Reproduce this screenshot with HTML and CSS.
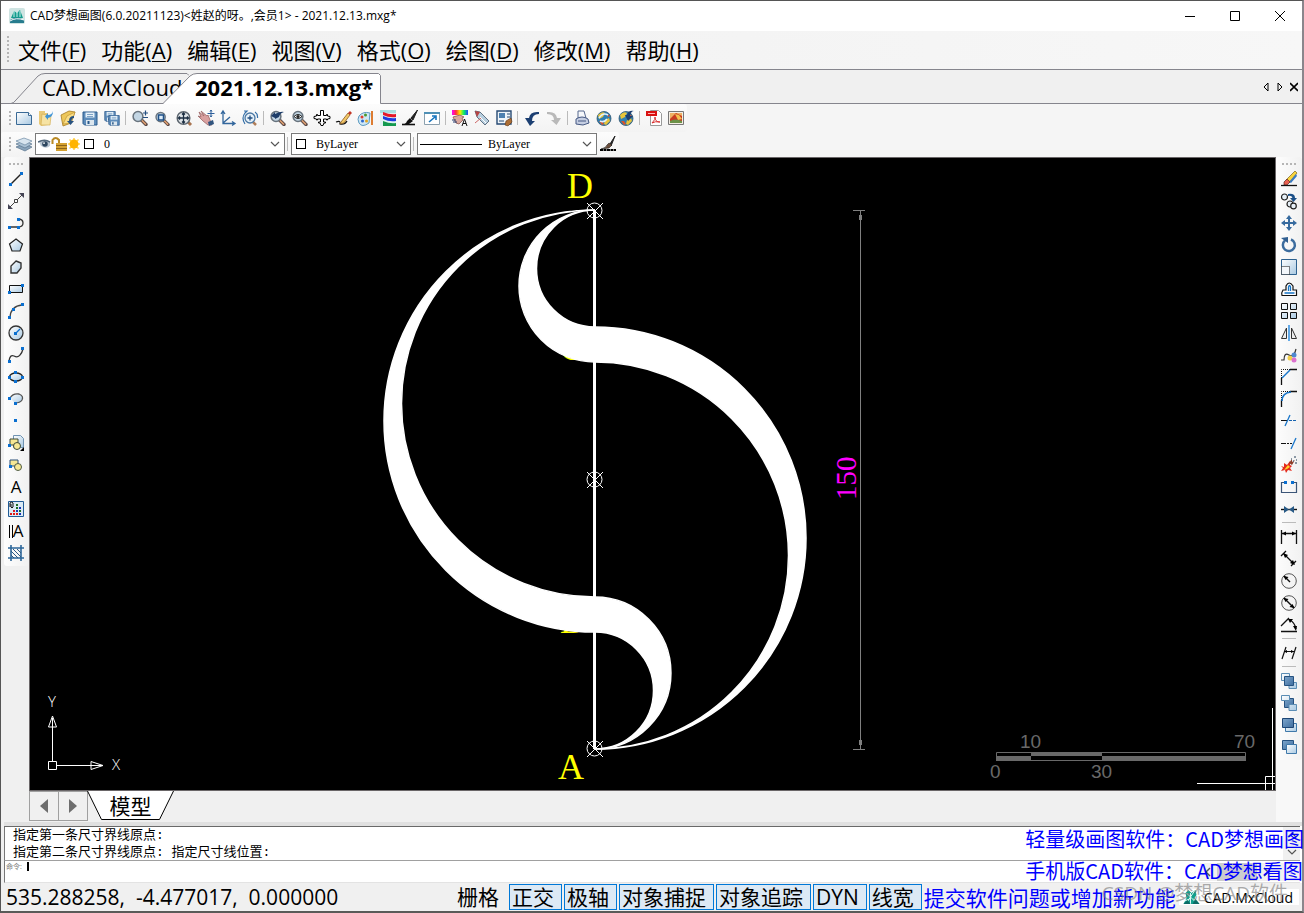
FILE: index.html
```html
<!DOCTYPE html>
<html lang="zh-CN">
<head>
    <meta charset="UTF-8">
    <meta name="viewport" content="width=device-width, initial-scale=1.0">
    <title>CAD梦想画图</title>
    <link rel="stylesheet" href="styles.css">
</head>
<body>
    <!-- Shared icon parts -->
    <svg class="defs" aria-hidden="true">
        <defs>
            <linearGradient id="sheet" x1="0" y1="0" x2="1" y2="1"><stop offset="0" stop-color="#fff"/><stop offset="1" stop-color="#a9c9e2"/></linearGradient>
            <linearGradient id="steel" x1="0" y1="0" x2="1" y2="1"><stop offset="0" stop-color="#7ea6cc"/><stop offset="1" stop-color="#3d6c9e"/></linearGradient>
            <linearGradient id="rainbow" x1="0" y1="0" x2="1" y2="0"><stop offset="0" stop-color="#f0f"/><stop offset=".25" stop-color="#f33"/><stop offset=".5" stop-color="#fe0"/><stop offset=".75" stop-color="#0e6"/><stop offset="1" stop-color="#24f"/></linearGradient>
        </defs>
        <symbol id="lens" viewBox="0 0 16 16">
            <path d="M9.500 10L14 14.500" stroke="#5c4a48" stroke-width="3.400" stroke-linecap="round"/>
            <path d="M10 10.500L13.500 14" stroke="#e0a070" stroke-width="1.600" stroke-linecap="round"/>
            <circle cx="6" cy="6.500" r="4.900" fill="#c3d6e4" stroke="#68737d" stroke-width="1.500"/>
        </symbol>
        <symbol id="floppy" viewBox="0 0 16 16">
            <path d="M1 2h14v13H2.500L1 13.500z" fill="#5f8dbb" stroke="#2b5a8c"/>
            <path d="M3.500 2.500h9v5h-9z" fill="#e6f0f8"/><path d="M5 4.500h6M5 6.500h6" stroke="#7ea3c6"/>
            <path d="M4 10h8v5H4z" fill="#dce6ee"/><path d="M5.500 11h2v3h-2z" fill="#2b5a8c"/>
        </symbol>
        <symbol id="globe" viewBox="0 0 16 16">
            <circle cx="8" cy="8.500" r="7" fill="#2f7fb2" stroke="#31556f" stroke-width=".8"/>
            <path d="M2 5q4-4 7-2l-2 4-4 2zM9 10l4-2 1 3-4 4-2-1z" fill="#e8c43a"/>
            <path d="M3 11l3 0 2 3-2 1zM11 4l3 2-2 1z" fill="#d9542b"/>
        </symbol>
        <symbol id="brand" viewBox="0 0 16 16">
            <path d="M0 15l3-6-1-5 3-3 3 3 4-3 1 5-2 3 5 6z" fill="#12a08e"/>
            <path d="M3 14L11 2M3 4l10 10M7 4v11M1 12l5-2M10 10l5 2" fill="none" stroke="#e2f7f3"/>
            <path d="M0 15l4-4 3 4zM9 15l3-5 4 5z" fill="#0b6b66"/>
        </symbol>
        <symbol id="node" viewBox="0 0 3 3"><path d="M0 0h3v3H0z" fill="#0a6fd0"/></symbol>
        <symbol id="chevron" viewBox="0 0 10 6"><path d="M1 1l4 4 4-4" fill="none" stroke="#555" stroke-width="1.200"/></symbol>
    </svg>

    <div class="window">
        <header class="titlebar">
            <svg class="app-icon" viewBox="0 0 16 16"><rect width="16" height="16" rx="2" fill="#cfe4e2"/><path d="M2 10l3-7 3 2 3-3 3 8z" fill="#149c8d"/><path d="M5 3v6M8 4v5M11 3v6" stroke="#c9f0ea"/><path d="M1 12q7-5 14 0v3H1z" fill="#277c8e"/><path d="M1 13q6-4 14-1" fill="none" stroke="#fff"/></svg>
            <h1 class="title">CAD梦想画图(6.0.20211123)&lt;姓赵的呀。,会员1&gt; - 2021.12.13.mxg*</h1>
            <div class="window-controls">
                <button aria-label="最小化"><svg viewBox="0 0 10 10"><path d="M0 5.500h10" stroke="#000"/></svg></button>
                <button aria-label="最大化"><svg viewBox="0 0 10 10"><path d="M.5.500h9v9h-9z" fill="none" stroke="#000"/></svg></button>
                <button aria-label="关闭"><svg viewBox="0 0 10 10"><path d="M0 0l10 10M10 0L0 10" stroke="#000"/></svg></button>
            </div>
        </header>

        <nav class="menubar">
            <span class="grip"></span>
            <button>文件(<u>F</u>)</button>
            <button>功能(<u>A</u>)</button>
            <button>编辑(<u>E</u>)</button>
            <button>视图(<u>V</u>)</button>
            <button>格式(<u>O</u>)</button>
            <button>绘图(<u>D</u>)</button>
            <button>修改(<u>M</u>)</button>
            <button>帮助(<u>H</u>)</button>
        </nav>

        <div class="doc-tabs">
            <button class="doc-tab">
                <svg viewBox="0 0 178 31" preserveAspectRatio="none"><path d="M0 30.500L4 28 27 3Q30 .5 34 .5H178V30.500" fill="#f0f0f0"/><path d="M0 30.500Q3 30 5 27L27 3Q30 .5 34 .5H176l2 2" fill="none" stroke="#85858d"/><path d="M0 30.500h178" stroke="#85858d"/></svg>
                <span>CAD.MxCloud</span>
            </button>
            <button class="doc-tab active">
                <svg viewBox="0 0 218 31" preserveAspectRatio="none"><path d="M0 31L27 3Q30 .5 34 .5H215.500l2 2V31z" fill="#fff"/><path d="M0 30.500L27 3Q30 .5 34 .5H215.500l2 2V30.500" fill="none" stroke="#85858d"/></svg>
                <span>2021.12.13.mxg*</span>
            </button>
            <div class="doc-controls">
                <button aria-label="上一个"><svg viewBox="0 0 8 10"><path d="M6 1v8L2 5z" fill="none" stroke="#000"/></svg></button>
                <button aria-label="下一个"><svg viewBox="0 0 8 10"><path d="M2 1v8l4-4z" fill="none" stroke="#000"/></svg></button>
                <button aria-label="关闭文档"><svg viewBox="0 0 8 10"><path d="M0 1l8 8M8 1L0 9" stroke="#000" stroke-width="1.600"/></svg></button>
            </div>
        </div>

        <div class="toolbars">
            <div class="toolbar">
                <span class="grip"></span>
                <button aria-label="新建"><svg viewBox="0 0 16 16"><path d="M.5 2.500h12l3 3v9H.5z" fill="url(#sheet)" stroke="#3a6a96"/><path d="M12.500 2.500v3h3" fill="#fff" stroke="#3a6a96"/></svg></button>
                <button aria-label="打开"><svg viewBox="0 0 16 16"><path d="M1 1h6v2h3v12l-7 1-2-2z" fill="#e8c977"/><path d="M4 4l9 2-1 9H3z" fill="#f6e3a4" stroke="#d0a848" stroke-width=".6"/><path d="M15 1q-1 4-5 4V3L7 6.500 10 10V8q5-1 5-7" fill="#3f94d6"/></svg></button>
                <button aria-label="打开网络图纸"><svg viewBox="0 0 16 16"><path d="M1 5l8-4 6 1-4 11-8 3-1-5z" fill="#edc75a" stroke="#a47a22" stroke-width=".8"/><path d="M3 14L7 6l8-4-4 11z" fill="#f8dd87" stroke="#b98d2c" stroke-width=".6"/><path d="M14 6q-5 0-5 5H7l3.500 4 3.500-4h-2.500q0-3 2.500-3z" fill="#28527f"/></svg></button>
                <button aria-label="保存"><svg viewBox="0 0 16 16"><use href="#floppy"/></svg></button>
                <button aria-label="另存为"><svg viewBox="0 0 16 16"><use href="#floppy" width="12" height="12"/><use href="#floppy" x="4" y="4" width="12" height="12"/></svg></button>
                <span class="sep"></span>
                <button aria-label="缩放"><svg viewBox="0 0 16 16"><use href="#lens"/><path d="M11 3h5M13.500.5v5M11 7.500h5" stroke="#234e80" stroke-width="1.200"/></svg></button>
                <button aria-label="窗口缩放"><svg viewBox="0 0 16 16"><use href="#lens" x="1" y="1" width="15" height="15"/><path d="M4.500 5h5v5h-5z" fill="#dcecf8" stroke="#1f4f86" stroke-width="1.500"/></svg></button>
                <button aria-label="范围缩放"><svg viewBox="0 0 16 16"><path d="M12 12l3 3" stroke="#a87450" stroke-width="3"/><circle cx="7.500" cy="8" r="6.300" fill="#e0e5e9" stroke="#5c656e" stroke-width="1.500"/><path d="M7.500 3v10M2.500 8h10M6 4.500L7.500 3 9 4.500M6 11.500L7.500 13 9 11.500M4 6.500L2.500 8 4 9.500M11 6.500L12.500 8 11 9.500" fill="none" stroke="#1c2e42" stroke-width="1.300"/></svg></button>
                <button aria-label="平移"><svg viewBox="0 0 16 16"><path d="M1 2l5 4-3-5 6 5 1-1 2 5 2 5-4 0-5-4-5-5 3 1z" fill="#d9a0a0" stroke="#9a6464" stroke-width=".8"/><path d="M10 12l5-2 1 4-5 2z" fill="#31547e"/><path d="M13 0v7M9.500 3.500h7M12 1.500L13 0l1 1.500M12 5.500l1 1.500 1-1.500" fill="none" stroke="#2d5f9b"/></svg></button>
                <button aria-label="坐标系"><svg viewBox="0 0 16 16"><path d="M3 2v11.500h11M3 13l7-6M1 4l2-3 2 3M12 11.500l3 2-3 2" fill="none" stroke="#32669c" stroke-width="1.300"/></svg></button>
                <button aria-label="动态缩放"><svg viewBox="0 0 16 16"><path d="M11 12l3 3" stroke="#b07e5a" stroke-width="2.500"/><circle cx="8" cy="8" r="5" fill="#e6f0f8" stroke="#4a78a4" stroke-width="1.300"/><path d="M5.500 8h5M8 5.500v5" stroke="#204d80" stroke-width="1.300"/><path d="M3 14Q-1 8 3 3L5 1 2 1M13 2q3 2 2.500 6" fill="none" stroke="#346fa8" stroke-width="1.200"/></svg></button>
                <span class="sep"></span>
                <button aria-label="上一视图"><svg viewBox="0 0 16 16"><use href="#lens"/><path d="M1 6l4-4v2q6-3 9-2-4 1-5 5l-4 2V8z" fill="#1e3d69"/></svg></button>
                <button aria-label="鸟瞰"><svg viewBox="0 0 16 16"><use href="#lens"/><path d="M2 6.500q4-4 8 0-4 4-8 0z" fill="#fff" stroke="#222"/><circle cx="6" cy="6.500" r="1.600" fill="#222"/></svg></button>
                <button aria-label="移动视图"><svg viewBox="0 0 16 16"><path d="M6.500.5h3v5h3v-1h1v1.500l2.500.5v2l-2.500.5V10h-1V9h-3v3h2v1h-1.500l-1 2.500h-2L6 13H4.500v-1h2V9h-3v1h-1V9L0 8.500v-2L2.500 6V4.500h1v1h3z" fill="#fff" stroke="#000"/></svg></button>
                <button aria-label="铅笔"><svg viewBox="0 0 16 16"><path d="M0 12q5-2 4 2 5 1 7-3" fill="none" stroke="#111" stroke-width="1.200"/><path d="M5 12l7-9 2 2-6 8-4 1z" fill="#f1c768" stroke="#8c5c1e" stroke-width=".8"/><path d="M12 3l2-2 2 2-2 2z" fill="#c23626"/></svg></button>
                <button aria-label="颜色"><svg viewBox="0 0 16 16"><path d="M1 6q4-5 11-3l-1 10q-7 5-10 0-2-4 0-7z" fill="#cfe7f5" stroke="#5b9ac0"/><circle cx="4" cy="7" r="1.500" fill="#e03c2c"/><circle cx="7.500" cy="5" r="1.500" fill="#4a9a2e"/><circle cx="4.500" cy="11" r="1.500" fill="#2c65c9"/><circle cx="8.500" cy="11" r="1.500" fill="#e2a41e"/><path d="M14 1v14" stroke="#dd7c31" stroke-width="2"/></svg></button>
                <button aria-label="图层颜色"><svg viewBox="0 0 16 16"><path d="M0 0h16v16H0z" fill="#dff0f1"/><path d="M0 0h16v3H0z" fill="#a9dde0"/><path d="M3 2q7 3 13 2v3Q9 8 3 5z" fill="#e51628"/><path d="M3 6q7 3 13 2v3q-7 1-13-2z" fill="#1d3bde"/><path d="M3 11q7 3 13 2v3H3z" fill="#13984e"/></svg></button>
                <button aria-label="画刷"><svg viewBox="0 0 16 16"><path d="M15.500 0L9 8l2 2z" fill="#222" stroke="#222"/><path d="M8 8l3 3-4 3-7 1q4-1 5-4z" fill="#111"/><path d="M0 14.500h13" stroke="#111" stroke-width="1.600"/></svg></button>
                <button aria-label="全屏"><svg viewBox="0 0 16 16"><path d="M.5 2.500h15v12H.5z" fill="#fff" stroke="#8ba0ae"/><path d="M0 2h16v2H0z" fill="#4f90b5"/><path d="M5 12l6-5M8 6h4v4" fill="none" stroke="#1674bd" stroke-width="1.600"/></svg></button>
                <span class="sep"></span>
                <button aria-label="快速选择"><svg viewBox="0 0 16 16"><path d="M0 0h16v5H0z" fill="url(#rainbow)"/><path d="M1 7l7-2 4 2-2 1 1 2-4 4-3-1z" fill="#dba99e" stroke="#8a554f" stroke-width=".8"/><path d="M0 10h4M1 12h4" stroke="#223c70"/><path d="M10 16l2.500-7 2.500 7M11 13.500h3" fill="none" stroke="#111"/></svg></button>
                <button aria-label="擦除"><svg viewBox="0 0 16 16"><path d="M1 1l5 1 9 9-4 4-8-8z" fill="#b8cfdf" stroke="#43566a" stroke-width=".8"/><path d="M1 1l5 1-3 5z" fill="#b84444"/><path d="M1 13l6-5" stroke="#c66"/><path d="M6 7l6 6" stroke="#fff"/></svg></button>
                <button aria-label="特性"><svg viewBox="0 0 16 16"><path d="M1 1h14v13H1z" fill="#eef4f9" stroke="#274a74" stroke-width="1.400"/><path d="M3 3h6v5H3z" fill="#4d80b0"/><path d="M11 4h3M11 7h3M3 11h5" stroke="#274a74" stroke-width="1.200"/><path d="M15 8l-5 3-1 4 3 1 4-4z" fill="#ad6e35" stroke="#5d3717" stroke-width=".6"/></svg></button>
                <span class="sep"></span>
                <button aria-label="撤销"><svg viewBox="0 0 16 16"><path d="M15 2Q6 1 5 8H1l5 8 5-5H8q0-7 7-7z" fill="#1c3f72"/></svg></button>
                <button aria-label="重做"><svg viewBox="0 0 16 16"><path d="M1 2q9-1 10 6h4l-4.500 7L5 10h3Q8 4 1 4z" fill="#b9b9b9"/></svg></button>
                <span class="sep"></span>
                <button aria-label="打印"><svg viewBox="0 0 16 16"><path d="M4 1l6-0 2 7H4z" fill="#f6f8fb" stroke="#56688e"/><path d="M2 9q6-4 12 0l1 4-6 2-7-1z" fill="#c5cee2" stroke="#465983"/><path d="M4 11h8" stroke="#465983"/></svg></button>
                <button aria-label="网络同步"><svg viewBox="0 0 16 16"><use href="#globe"/><path d="M3 8q4-6 9-3M4 11q4 2 7-2" fill="none" stroke="#dff1ff" stroke-width="1.600"/></svg></button>
                <button aria-label="网络下载"><svg viewBox="0 0 16 16"><use href="#globe"/><path d="M16 1q-3 0-4 5h3l-5 5-3-6h2q1-5 7-4z" fill="#1c3f72"/></svg></button>
                <span class="sep"></span>
                <button aria-label="输出PDF"><svg viewBox="0 0 16 16"><path d="M4.500.5h8l3 3v12h-11z" fill="#fff" stroke="#9a9a9a"/><path d="M0 1h11v5H0z" fill="#d91313"/><path d="M2 3.500h7" stroke="#ffb5b5"/><path d="M6 13q4-4 3-6 0 5 5 5-5-1-8 1" fill="none" stroke="#d93030"/></svg></button>
                <button aria-label="输出图片"><svg viewBox="0 0 16 16"><path d="M.5 1.500h15v13H.5z" fill="#f4eee4" stroke="#777"/><path d="M2 3h12v10H2z" fill="#efb163"/><path d="M2 9l6-6 6 3v7H2z" fill="#c93b21"/><path d="M7 4l4 1 3 4-4 1z" fill="#f3c14e"/><path d="M2 11q5-3 12 0v2H2z" fill="#6c9248"/></svg></button>
            </div>

            <div class="toolbar layers">
                <span class="grip"></span>
                <button aria-label="图层管理"><svg viewBox="0 0 16 16"><path d="M0 11l8-3 8 3-7 4z" fill="#8aa4bb" stroke="#58738c" stroke-width=".7"/><path d="M0 8l8-3 8 3-7 4z" fill="#a9c0d3" stroke="#58738c" stroke-width=".7"/><path d="M0 5l8-3 8 3-7 4z" fill="#d7e4ee" stroke="#6d8aa3" stroke-width=".7"/></svg></button>
                <div class="combo combo-layer">
                    <svg class="glyph wide" viewBox="0 0 14 12"><path d="M1 3q7-3 12 1v4q-4 4-10 0z" fill="#b9c6d2"/><path d="M0 4q7-4 13 0" fill="none" stroke="#51667a" stroke-width="1.600"/><circle cx="7.500" cy="6" r="3" fill="#2d465f"/><circle cx="6.500" cy="5" r="1" fill="#fff"/></svg>
                    <svg class="glyph tall" viewBox="0 0 16 14"><path d="M1.500 7V3q3-4 6.500 0v4" fill="none" stroke="#b98a25" stroke-width="2"/><path d="M5 6h11v8H5z" fill="#d4a02f"/><path d="M5 8.500h11M5 11.500h11" stroke="#8c641a"/></svg>
                    <svg class="glyph" viewBox="0 0 12 12"><path d="M6 0v12M0 6h12M1.500 1.500l9 9M10.500 1.500l-9 9" stroke="#ffd24a" stroke-width="1.500"/><circle cx="6" cy="6" r="4.500" fill="#ffb400"/></svg>
                    <span class="swatch"></span>
                    <select aria-label="图层"><option>0</option></select>
                    <svg class="arrow"><use href="#chevron"/></svg>
                </div>
                <span class="sep"></span>
                <div class="combo combo-color">
                    <span class="swatch"></span>
                    <select aria-label="颜色"><option>ByLayer</option></select>
                    <svg class="arrow"><use href="#chevron"/></svg>
                </div>
                <span class="sep"></span>
                <div class="combo combo-line">
                    <span class="line-sample"></span>
                    <select aria-label="线型"><option>ByLayer</option></select>
                    <svg class="arrow"><use href="#chevron"/></svg>
                </div>
                <button aria-label="线宽设置"><svg viewBox="0 0 16 16"><path d="M15 0l-5 8 1 2z" fill="#222" stroke="#222"/><path d="M9 7l3 2-3 3-8 1q5-1 6-4z" fill="#6b4e3c" stroke="#222" stroke-width=".6"/><path d="M0 14h16" stroke="#000" stroke-width="2" stroke-dasharray="3 .5"/></svg></button>
            </div>
        </div>

        <main class="workspace">
            <div class="sidebar">
                <div class="tool-column">
                    <span class="grip-h"></span>
                    <button aria-label="直线"><svg viewBox="0 0 16 16"><path d="M2 14L14 2" stroke="#222" stroke-width="1.400"/><use href="#node" x="1" y="12" width="3" height="3"/><use href="#node" x="12" y="1" width="3" height="3"/></svg></button>
                    <button aria-label="构造线"><svg viewBox="0 0 16 16"><path d="M2 14L14 2" stroke="#444"/><path d="M0 16v-5l5 5zM16 0v5l-5-5z" fill="#445"/><path d="M6.500 6.500h3v3h-3z" fill="#fff" stroke="#444"/></svg></button>
                    <button aria-label="多段线"><svg viewBox="0 0 16 16"><path d="M1 12h9M10 4q5 0 5 4t-5 4" fill="none" stroke="#333" stroke-width="1.300"/><use href="#node" y="11" width="3" height="3"/><use href="#node" x="9" y="11" width="3" height="3"/><use href="#node" x="9" y="3" width="3" height="3"/></svg></button>
                    <button aria-label="正多边形"><svg viewBox="0 0 16 16"><path d="M8 2l6.500 5L12 14H4L1.500 7z" fill="url(#sheet)" stroke="#222" stroke-width="1.200"/></svg></button>
                    <button aria-label="多边形"><svg viewBox="0 0 16 16"><path d="M8 2l5 2 0 5-4 5H3V7z" fill="url(#sheet)" stroke="#333" stroke-width="1.400"/></svg></button>
                    <button aria-label="矩形"><svg viewBox="0 0 16 16"><path d="M1.500 4.500h13v7h-13z" fill="url(#sheet)" stroke="#111"/><use href="#node" y="10" width="3" height="3"/><use href="#node" x="13" y="3" width="3" height="3"/></svg></button>
                    <button aria-label="圆弧"><svg viewBox="0 0 16 16"><path d="M2 14Q3 3 14 2" fill="none" stroke="#444" stroke-width="1.300"/><use href="#node" y="13" width="3" height="3"/><use href="#node" x="4" y="5" width="3" height="3"/><use href="#node" x="13" width="3" height="3"/></svg></button>
                    <button aria-label="圆"><svg viewBox="0 0 16 16"><circle cx="8" cy="8" r="7" fill="url(#sheet)" stroke="#333" stroke-width="1.300"/><path d="M8 8l4-4" stroke="#0a6fd0" stroke-width="1.300"/><use href="#node" x="6" y="7" width="3" height="3"/></svg></button>
                    <button aria-label="样条曲线"><svg viewBox="0 0 16 16"><path d="M1 14Q2 7 6 9t6-1q2-2 3-6" fill="none" stroke="#333" stroke-width="1.300"/><use href="#node" y="13" width="3" height="3"/><use href="#node" x="13" width="3" height="3"/></svg></button>
                    <button aria-label="椭圆"><svg viewBox="0 0 16 16"><ellipse cx="8" cy="8" rx="6.500" ry="4" fill="url(#sheet)" stroke="#222" stroke-width="1.300"/><use href="#node" x="0" y="7" width="3" height="3"/><use href="#node" x="13" y="7" width="3" height="3"/><use href="#node" x="6" y="2" width="3" height="3"/><use href="#node" x="6" y="11" width="3" height="3"/></svg></button>
                    <button aria-label="椭圆弧"><svg viewBox="0 0 16 16"><path d="M2 7q3-5 9-4 5 2 3 6-2 3-7 3" fill="url(#sheet)" stroke="#555" stroke-width="1.300"/><use href="#node" y="6" width="3" height="3"/><use href="#node" x="6" y="11" width="3" height="3"/></svg></button>
                    <button aria-label="点"><svg viewBox="0 0 16 16"><use href="#node" x="6" y="6" width="3" height="3"/></svg></button>
                    <button aria-label="插入块"><svg viewBox="0 0 16 16"><path d="M5.500.5h7l3 3v9h-10z" fill="url(#sheet)" stroke="#7093b2"/><path d="M2 4h8v6H2z" fill="#f6e894" stroke="#3d4a38"/><circle cx="9" cy="11" r="3.500" fill="#f6e894" stroke="#3d4a38"/><path d="M16 12v4h-4z"/><use href="#node" y="9" width="3" height="3"/></svg></button>
                    <button aria-label="创建块"><svg viewBox="0 0 16 16"><path d="M2 3h8v6H2z" fill="#f6e894" stroke="#2a4f79"/><circle cx="10" cy="10" r="3.500" fill="#f6e894" stroke="#4d5b45"/><use href="#node" x="1" y="8" width="3" height="3"/></svg></button>
                    <button class="letter">A</button>
                    <button aria-label="填充"><svg viewBox="0 0 16 16"><path d="M.5.5h15v15H.5z" fill="#dceaf5" stroke="#215c96"/><path d="M2 6V2q2-2 3 0v4q-1 2-2 0V3" fill="none" stroke="#111"/><path d="M8 4h2M8 7h2M11 10h2" stroke="#1b6e26" stroke-width="2" stroke-dasharray="2 1"/><path d="M11 7h2M8 10h2M11 13h2" stroke="#1634b5" stroke-width="2"/><path d="M5 10h2M2 13h2M5 13h2M8 13h2" stroke="#e01919" stroke-width="2"/></svg></button>
                    <button class="letter"><span class="bars"></span>A</button>
                    <button aria-label="图案填充"><svg viewBox="0 0 16 16"><path d="M3 0v16M13 0v16M0 3h16M0 13h16" stroke="#2d679a" stroke-width="1.600"/><path d="M3 6l7 7M5 4l8 8M9 4l4 4M3 10l3 3" stroke="#2b5984"/></svg></button>
                </div>
            </div>

            <div class="center">
                <!-- 1 unit = 1 px, origin offset by the docked bars -->
                <svg class="canvas" viewBox="30 158 1245 632" role="img" aria-label="图形">
                    <g class="labels">
                        <text x="567" y="198">D</text>
                        <text x="560" y="360">C</text>
                        <text x="560" y="633">B</text>
                        <text x="558" y="779">A</text>
                    </g>
                    <g class="solid">
                        <path d="M595 210A211 211 0 0 0 595 632A58.500 58.500 0 0 1 595 749A76 76 0 0 0 595 597A193.500 193.500 0 0 1 595 210z"/>
                        <path d="M595 749A211 211 0 0 0 595 327A58.500 58.500 0 0 1 595 210A76 76 0 0 0 595 362A193.500 193.500 0 0 1 595 749z"/>
                    </g>
                    <path class="axis" d="M594.500 210V749"/>
                    <g class="marks">
                        <circle cx="594.500" cy="210.500" r="7.500"/><path d="M587 203l16 16M603 203l-16 16"/>
                        <circle cx="594.500" cy="479.500" r="7.500"/><path d="M587 472l16 16M603 472l-16 16"/>
                        <circle cx="594.500" cy="748.500" r="7.500"/><path d="M587 741l16 16M603 741l-16 16"/>
                    </g>
                    <g class="dimension">
                        <path d="M860.500 210V749M853 210.500h12M853 749.500h12"/>
                        <path d="M860.500 215v5M860.500 740v5" stroke-width="3"/>
                        <text transform="translate(856 500) rotate(-90)">150</text>
                    </g>
                    <g class="ucs">
                        <path d="M48.500 761.500h8v8h-8zM52.500 761V727M57 765.500h34M52.500 716l4 11h-8zM52.500 718v9M103 765.500l-12 4v-8zM91 765.500h12"/>
                        <text x="48" y="707">Y</text>
                        <text x="112" y="770">X</text>
                    </g>
                    <g class="scale">
                        <path d="M996.500 752.500h249v8h-249z" fill="none" stroke="#696969"/>
                        <path d="M996 756h35v5h-35zM1031 752h71v4h-71zM1102 756h144v5h-144z"/>
                        <text x="1020" y="748">10</text>
                        <text x="1234" y="748">70</text>
                        <text x="990" y="778">0</text>
                        <text x="1091" y="778">30</text>
                    </g>
                    <path class="cursor" d="M1272.500 708V790M1197 783.500h78M1265.500 790V776.500h10"/>
                </svg>
                <div class="model-tabs">
                    <button class="nav" aria-label="向左"><svg viewBox="0 0 8 14"><path d="M8 0v14L0 7z" fill="#6d6d6d"/></svg></button>
                    <button class="nav" aria-label="向右"><svg viewBox="0 0 8 14"><path d="M0 0v14l8-7z" fill="#6d6d6d"/></svg></button>
                    <button class="model-tab"><svg viewBox="0 0 87 30" preserveAspectRatio="none"><path d="M.5 0l14 28.500h58L86.500 0" fill="#fff" stroke="#000"/></svg><span>模型</span></button>
                </div>
            </div>

            <div class="sidebar right">
                <div class="tool-column">
                    <span class="grip-h"></span>
                    <button aria-label="删除"><svg viewBox="0 0 16 16"><path d="M5 9l9-9 2 2-8 10z" fill="#f8d43d" stroke="#7d6519" stroke-width=".7"/><path d="M8 11l7-8 1 2-6 7z" fill="#3c7ac0"/><path d="M3 11l3-3 3 3-3 3H3z" fill="#e86050" stroke="#5a2a24" stroke-width=".7"/><path d="M0 14.500h16" stroke="#111" stroke-width="1.300"/></svg></button>
                    <button aria-label="复制"><svg viewBox="0 0 16 16"><circle cx="3.500" cy="4" r="3" fill="#e7f0f7" stroke="#222" stroke-width="1.200"/><circle cx="9" cy="11" r="3" fill="#e7f0f7" stroke="#222" stroke-width="1.200"/><circle cx="12.500" cy="13" r="2.800" fill="#e7f0f7" stroke="#222" stroke-width="1.200"/><path d="M7 1q7-1 7 4h2l-3.500 4L9 5h2.500q-1-3-4.500-2z" fill="#1b4f87"/></svg></button>
                    <button aria-label="移动"><svg viewBox="0 0 16 16"><path d="M8 0l3 4H9v3h3V5l4 3-4 3V9H9v3h2l-3 4-3-4h2V9H4v2L0 8l4-3v2h3V4H5z" fill="#376b9f"/></svg></button>
                    <button aria-label="旋转"><svg viewBox="0 0 16 16"><path d="M4 3.500A6 6 0 1 0 10 2.500" fill="none" stroke="#3c6c9e" stroke-width="2.500"/><path d="M0 1l7-1v6z" fill="#315f91"/></svg></button>
                    <button aria-label="缩放对象"><svg viewBox="0 0 16 16"><path d="M.5.5h15v15H.5z" fill="url(#sheet)" stroke="#2d618f"/><path d="M.5 7.500h8v8h-8z" fill="#f3f7fb" stroke="#111" stroke-dasharray="1 1"/></svg></button>
                    <button aria-label="偏移"><svg viewBox="0 0 16 16"><path d="M1 14.500h14.500V9H12V5Q8-1 5 5v4H2q-2 3-1 5.500z" fill="#fff" stroke="#111" stroke-width="1.200"/><path d="M3.500 12h10M7.500 10V6q1-3 2 0v4" fill="none" stroke="#1473c5" stroke-width="1.300"/></svg></button>
                    <button aria-label="阵列"><svg viewBox="0 0 16 16"><path d="M.5.5h6v6h-6zM9.500.5h6v6h-6zM.5 9.500h6v6h-6zM9.500 9.500h6v6h-6z" fill="url(#sheet)" stroke="#111"/></svg></button>
                    <button aria-label="镜像"><svg viewBox="0 0 16 16"><path d="M5.500 3v10.500h-5zM10.500 3v10.500h5z" fill="#eee" stroke="#333"/><path d="M8 0v16" stroke="#1580df" stroke-width="1.300"/></svg></button>
                    <button aria-label="编辑曲线"><svg viewBox="0 0 16 16"><path d="M0 13h3Q3 5 8 8t7-6" fill="none" stroke="#333" stroke-width="1.200"/><circle cx="9" cy="11" r="2.500" fill="#f2cf4a"/><circle cx="13" cy="8" r="2.500" fill="#4d88d0"/><circle cx="13" cy="13" r="2.500" fill="#dc72ce"/></svg></button>
                    <button aria-label="倒角"><svg viewBox="0 0 16 16"><path d="M.5 9V.5H9" fill="none" stroke="#111" stroke-dasharray="1 1"/><path d="M.5 16V9M9 .5h7" stroke="#111" stroke-width="1.300"/><path d="M1 9l8-8" stroke="#1976ca" stroke-width="1.400"/></svg></button>
                    <button aria-label="圆角"><svg viewBox="0 0 16 16"><path d="M.5 9V.5H9" fill="none" stroke="#111" stroke-dasharray="1 1"/><path d="M.5 16V9M9 .5h7" stroke="#111" stroke-width="1.300"/><path d="M1 10q0-8 9-9" fill="none" stroke="#1976ca" stroke-width="1.700"/></svg></button>
                    <button aria-label="修剪"><svg viewBox="0 0 16 16"><path d="M0 7.500h6" stroke="#111"/><path d="M8 7.500h8" stroke="#1664b0" stroke-dasharray="3 1"/><path d="M4 13L9 2" stroke="#1976ca" stroke-width="1.300"/></svg></button>
                    <button aria-label="延伸"><svg viewBox="0 0 16 16"><path d="M0 8.500h5" stroke="#111"/><path d="M6 8.500h6" stroke="#111" stroke-dasharray="2 1"/><path d="M10 14l5-11" stroke="#1976ca" stroke-width="1.300"/></svg></button>
                    <button aria-label="分解"><svg viewBox="0 0 16 16"><path d="M0 9l3 1 0-4 3 2 3-4 0 4 2 1-2 2 2 3-4-1-2 3-1-3-4 1 2-3z" fill="#e42a1c"/><path d="M3 13l4-5 2 2-3 2z" fill="#ffd42a"/><path d="M8 6l3-4 0 3 3-2-3 5z" fill="#8c3c28"/><path d="M10 2h1M13 0h2M12 4h1M15 3h1M14 6h2" stroke="#687a89" stroke-width="1.500"/></svg></button>
                    <button aria-label="打断"><svg viewBox="0 0 16 16"><path d="M4 3.500H.5v10h15v-10H12" fill="none" stroke="#3b5577" stroke-width="1.200"/><use href="#node" x="3" y="2" width="3" height="3"/><use href="#node" x="10" y="2" width="3" height="3"/></svg></button>
                    <button aria-label="合并"><svg viewBox="0 0 16 16"><path d="M0 8.500h16" stroke="#111" stroke-width="1.400"/><path d="M3 5l5 3.500L3 12zM13 5L8 8.500l5 3.500z" fill="#285a86"/></svg></button>
                    <span class="sep-h"></span>
                    <button aria-label="线性标注"><svg viewBox="0 0 16 16"><path d="M.5 1v14M15.500 1v14M1 4.500h14" stroke="#111" stroke-width="1.300"/><path d="M1 4.500l4-2v4zM15 4.500l-4-2v4z"/></svg></button>
                    <button aria-label="对齐标注"><svg viewBox="0 0 16 16"><path d="M0 5l5-5M10 15l5-5M3 3l10 10" stroke="#111" stroke-width="1.300"/><path d="M2 2l5 2-3 3zM14 14l-5-2 3-3z"/></svg></button>
                    <button aria-label="半径标注"><svg viewBox="0 0 16 16"><circle cx="8" cy="8" r="7.300" fill="#f4f4f4" stroke="#555"/><path d="M3 3l6 6" stroke="#111" stroke-width="1.400"/><path d="M2.500 3l5 1-3 3z"/></svg></button>
                    <button aria-label="直径标注"><svg viewBox="0 0 16 16"><circle cx="8" cy="8" r="7.300" fill="#f4f4f4" stroke="#555"/><path d="M3 3l10 10" stroke="#111" stroke-width="1.400"/><path d="M2.500 3l5 1-3 3zM13.500 13l-5-1 3-3z"/></svg></button>
                    <button aria-label="角度标注"><svg viewBox="0 0 16 16"><path d="M0 14.500h16M0 9l8-8M9 3q5 3 6 9" fill="none" stroke="#111" stroke-width="1.300"/><path d="M7 2h5l-3 4zM12 9h4l-1 5z"/></svg></button>
                    <span class="sep-h"></span>
                    <button aria-label="倾斜标注"><svg viewBox="0 0 16 16"><path d="M1 14L5 2M11 14l4-12M4 6.500h9" stroke="#111" stroke-width="1.200"/><path d="M3 6.500l3-1.500v3zM13 6.500l-3-1.500v3z"/></svg></button>
                    <span class="sep-h"></span>
                    <button aria-label="前置"><svg viewBox="0 0 16 16"><path d="M.5.5h8v7h-8zM8 9.500h7.500v6H8z" fill="url(#sheet)" stroke="#5b8db4"/><path d="M3.500 3.500h9v9h-9z" fill="url(#steel)" stroke="#265280"/></svg></button>
                    <button aria-label="后置"><svg viewBox="0 0 16 16"><path d="M3.500 3.500h9v9h-9z" fill="url(#steel)" stroke="#265280"/><path d="M.5.5h8v5h-8zM8 9.500h7.500v6H8z" fill="url(#sheet)" stroke="#5b8db4"/></svg></button>
                    <button aria-label="置于对象之上"><svg viewBox="0 0 16 16"><path d="M4.500 6.500h11v8h-11z" fill="url(#sheet)" stroke="#3f79aa"/><path d="M1.500 1.500h11v9h-11z" fill="url(#steel)" stroke="#1d4675"/></svg></button>
                    <button aria-label="置于对象之下"><svg viewBox="0 0 16 16"><path d="M1.500 1.500h11v9h-11z" fill="url(#steel)" stroke="#265280"/><path d="M5.500 5.500h10v9h-10z" fill="url(#sheet)" stroke="#3f79aa"/></svg></button>
                </div>
            </div>
        </main>

        <section class="command">
            <div class="history">
                <div class="log">
                    <p>指定第一条尺寸界线原点:</p>
                    <p>指定第二条尺寸界线原点: 指定尺寸线位置:</p>
                </div>
                <div class="scroll-y">
                    <svg class="up"><use href="#chevron"/></svg>
                    <svg><use href="#chevron"/></svg>
                </div>
            </div>
            <div class="prompt">
                <label for="cmd">命令:</label>
                <span class="caret"></span>
                <input id="cmd" type="text">
                <div class="scroll-x">
                    <svg viewBox="0 0 6 10"><path d="M5 1L1 5l4 4" fill="none" stroke="#555" stroke-width="1.500"/></svg>
                    <span class="thumb"></span>
                    <svg viewBox="0 0 6 10"><path d="M1 1l4 4-4 4" fill="none" stroke="#555" stroke-width="1.500"/></svg>
                </div>
            </div>
            <div class="promo">
                <a href="#">轻量级画图软件：CAD梦想画图</a>
                <a href="#">手机版CAD软件：CAD梦想看图</a>
            </div>
        </section>

        <footer class="statusbar">
            <span class="coords">535.288258,  -4.477017,  0.000000</span>
            <button>栅格</button>
            <button class="on">正交</button>
            <button class="on">极轴</button>
            <button class="on">对象捕捉</button>
            <button class="on">对象追踪</button>
            <button class="on">DYN</button>
            <button class="on">线宽</button>
            <a class="feedback" href="#">提交软件问题或增加新功能</a>
            <div class="brand"><svg><use href="#brand"/></svg>CAD.MxCloud</div>
            <span class="watermark">CSDN @梦想CAD软件</span>
        </footer>
    </div>
</body>
</html>
```
FILE: styles.css
```css
* {
    margin: 0;
    padding: 0;
    box-sizing: border-box;
}

body {
    font-family: "Open Sans", "Noto Sans CJK SC", sans-serif;
    font-size: 21px;
    color: #000;
    background: #f0f0f0;
}

button {
    font: inherit;
    color: inherit;
    background: none;
    border: none;
}

svg {
    display: block;
}

.defs {
    position: absolute;
    width: 0;
    height: 0;
}

.window {
    display: flex;
    flex-direction: column;
    height: 100vh;
    min-height: 800px;
    border: 1px solid #555;
    border-right: 2px solid #8a868c;
    border-bottom: 2px solid #5a5a58;
}

/* Title bar */
.titlebar {
    display: flex;
    align-items: center;
    height: 30px;
    padding-left: 8px;
    background: #fff;
}

.app-icon {
    width: 16px;
    height: 16px;
    margin-right: 5px;
}

.title {
    flex: 1;
    font-size: 12px;
    font-weight: 400;
    line-height: 18px;
    white-space: nowrap;
}

.window-controls {
    display: flex;
}

.window-controls button {
    display: flex;
    align-items: center;
    justify-content: center;
    width: 45px;
    height: 28px;
}

.window-controls svg {
    width: 10px;
    height: 10px;
}

/* Menu */
.menubar {
    display: flex;
    align-items: center;
    gap: 15px;
    height: 38px;
    padding-left: 6px;
    font-size: 22px;
    background: linear-gradient(90deg, #f0f0f0, #f7f7f7);
}

.menubar button {
    line-height: 28px;
    white-space: nowrap;
}

.menubar u {
    text-decoration-thickness: 1px;
    text-underline-offset: 2px;
}

.grip {
    flex: none;
    width: 2px;
    height: 14px;
    margin: 0 3px 0 8px;
    background: repeating-linear-gradient(#b5b5b5 0 2px, transparent 2px 4px);
}

.menubar .grip {
    height: 28px;
    margin: 0 -6px 0 0;
}

/* Document tabs */
.doc-tabs {
    display: flex;
    align-items: flex-end;
    height: 35px;
    padding-left: 10px;
    border-top: 1px solid #85858d;
    background: linear-gradient(#85858d, #85858d) bottom / 100% 1px no-repeat #f0f0f0;
}

.doc-tab {
    display: flex;
    position: relative;
    width: 178px;
    height: 31px;
    padding-left: 31px;
    font-size: 22px;
    line-height: 28px;
}

.doc-tab svg {
    position: absolute;
    inset: 0;
    width: 100%;
    height: 100%;
}

.doc-tab span {
    position: relative;
}

.doc-tab.active {
    width: 218px;
    margin-left: -26px;
    padding-left: 32px;
    font-weight: 700;
}

.doc-controls {
    display: flex;
    align-self: center;
    gap: 6px;
    margin-left: auto;
    padding-right: 4px;
}

.doc-controls svg {
    width: 8px;
    height: 10px;
}

/* Toolbars */
.toolbars {
    background: #f5f5f5;
}

.toolbar {
    display: flex;
    align-items: center;
    width: max-content;
    height: 28px;
    background: linear-gradient(#fcfcfc, #f3f3f3);
    border-radius: 3px;
}

.toolbar.layers {
    height: 25px;
    padding-bottom: 1px;
}

.toolbar > button,
.tool-column button {
    display: flex;
    align-items: center;
    justify-content: center;
    flex: none;
    width: 22px;
    height: 22px;
}

.toolbar > button svg,
.tool-column button svg {
    width: 16px;
    height: 16px;
    overflow: visible;
}

.toolbar .grip {
    margin: 0 2px 0 8px;
}

.sep {
    width: 2px;
    height: 14px;
    margin: 0 2px;
    border-left: 1px solid #bbb;
}

.combo {
    display: flex;
    align-items: center;
    height: 22px;
    padding: 0 4px;
    background: #fff;
    border: 1px solid #7a7a7a;
}

.combo-layer {
    width: 250px;
    padding-left: 2px;
}

.combo-color {
    width: 120px;
}

.combo-line {
    width: 180px;
    padding-left: 2px;
}

.glyph {
    width: 12px;
    height: 12px;
    margin-right: 4px;
}

.glyph.wide {
    width: 13px;
    margin-right: 0;
}

.glyph.tall {
    width: 16px;
    height: 14px;
    margin-right: 1px;
}

.swatch {
    width: 10px;
    height: 10px;
    margin-right: 10px;
    border: 1px solid #000;
}

.line-sample {
    width: 62px;
    margin-right: 6px;
    border-top: 1px solid #000;
}

.combo select {
    flex: 1;
    min-width: 0;
    font-family: "Liberation Serif", serif;
    font-size: 12px;
    color: #000;
    background: none;
    border: none;
    appearance: none;
}

.arrow {
    width: 10px;
    height: 6px;
    pointer-events: none;
}

/* Workspace */
.workspace {
    display: flex;
    flex: 1;
    min-height: 0;
}

.sidebar {
    width: 28px;
    padding-left: 3px;
    background: #f0f0f0;
}

.sidebar.right {
    width: 26px;
    padding-left: 0;
    background: #f8f8f8;
}

.tool-column {
    display: flex;
    flex-direction: column;
    align-items: center;
    padding: 0 1px 2px 0;
    background: linear-gradient(90deg, #fdfdfd, #f1f1f1);
    border-radius: 3px;
}

.grip-h {
    width: 14px;
    height: 2px;
    margin: 6px 0 3px;
    background: repeating-linear-gradient(90deg, #b5b5b5 0 2px, transparent 2px 4px);
}

.sep-h {
    width: 14px;
    height: 2px;
    margin: 2px 0;
    border-top: 1px solid #bbb;
}

.tool-column .letter {
    font-size: 17px;
    line-height: 22px;
}

.bars {
    width: 4px;
    height: 13px;
    border-left: 1px solid #000;
    border-right: 1px solid #000;
}

.center {
    display: flex;
    flex: 1;
    flex-direction: column;
    min-width: 0;
}

.canvas {
    flex: 1;
    width: 100%;
    min-height: 0;
    background: #000;
    border: 1px solid #6a6668;
}

.labels text {
    font-family: "Liberation Serif", serif;
    font-size: 36px;
    fill: #ff0;
}

.solid {
    fill: #fff;
    stroke: #fff;
    stroke-width: 1.5;
}

.axis {
    stroke: #fff;
    stroke-width: 3;
}

.marks,
.ucs path,
.cursor {
    fill: none;
    stroke: #fff;
}

.dimension path {
    stroke: #808080;
}

.dimension text {
    font-family: "Liberation Serif", serif;
    font-size: 29px;
    fill: #f0f;
}

.ucs text {
    font-size: 15px;
    font-weight: 300;
    fill: #fff;
}

.scale {
    fill: #696969;
    font-family: "Liberation Sans", sans-serif;
    font-size: 19px;
}

.model-tabs {
    display: flex;
    height: 31px;
    padding-bottom: 1px;
    background: #f0f0f0;
}

.nav {
    display: flex;
    align-items: center;
    justify-content: center;
    width: 30px;
    margin-right: -1px;
    border: 1px solid #a0a0a0;
}

.nav svg {
    width: 8px;
    height: 14px;
}

.model-tab {
    position: relative;
    width: 87px;
    line-height: 30px;
}

.model-tab svg {
    position: absolute;
    inset: 0;
    width: 100%;
    height: 100%;
}

.model-tab span {
    position: relative;
}

/* Command line */
.command {
    position: relative;
    margin-left: 3px;
    padding-right: 2px;
    background: #fff;
    border-top: 4px solid #e0e0e0;
}

.history {
    display: flex;
    height: 35px;
    border-top: 1px solid #696969;
    border-left: 1px solid #777;
    border-bottom: 1px solid #a0a0a0;
}

.log {
    flex: 1;
    padding-left: 8px;
    font-family: "Liberation Mono", "Noto Sans CJK SC", monospace;
    font-size: 13px;
    line-height: 17px;
    white-space: nowrap;
}

.log p {
    height: 17px;
}

.scroll-y {
    display: flex;
    flex-direction: column;
    align-items: center;
    justify-content: space-around;
    width: 17px;
    background: #f0f0f0;
}

.scroll-y svg {
    width: 10px;
    height: 6px;
}

.scroll-y .up {
    transform: rotate(180deg);
}

.prompt {
    display: flex;
    align-items: flex-start;
    height: 22px;
    border-left: 1px solid #777;
    border-bottom: 1px solid #e3e3e3;
}

.prompt label {
    padding-left: 1px;
    font-size: 7px;
    line-height: 12px;
    color: #777;
}

.caret {
    width: 2px;
    height: 9px;
    margin: 1px 0 0 5px;
    background: #000;
}

.prompt input {
    flex: 1;
    height: 18px;
    border: none;
    outline: none;
}

.scroll-x {
    display: flex;
    align-items: center;
    gap: 6px;
    width: 100px;
    height: 18px;
    margin-top: 2px;
    padding-left: 5px;
    background: #f0f0f0;
}

.scroll-x svg {
    width: 6px;
    height: 10px;
}

.thumb {
    width: 40px;
    height: 18px;
    background: #cdcdcd;
}

.promo {
    position: absolute;
    top: -3px;
    right: -2px;
    display: flex;
    flex-direction: column;
    font-family: "Noto Sans CJK SC", sans-serif;
    font-size: 20px;
    line-height: 32px;
    white-space: nowrap;
}

a {
    color: #00f;
    text-decoration: none;
}

/* Status bar */
.statusbar {
    position: relative;
    display: flex;
    align-items: center;
    gap: 2px;
    height: 28px;
    padding-left: 5px;
    white-space: nowrap;
}

.coords {
    flex: none;
    width: 446px;
    white-space: pre;
}

.statusbar button {
    flex: none;
    height: 26px;
    padding: 0 7px 0 2px;
    line-height: 24px;
    border: 1px solid transparent;
}

.statusbar .on {
    background: #dce9f5;
    border-color: #0078d7;
}

.brand {
    display: flex;
    align-items: center;
    gap: 4px;
    height: 16px;
    margin: 0 3px 0 auto;
    padding: 0 6px 0 4px;
    font-size: 14px;
    background: #fff;
}

.brand svg {
    width: 17px;
    height: 16px;
}

.watermark {
    position: absolute;
    right: 14px;
    bottom: 4px;
    font-size: 19px;
    line-height: 28px;
    color: rgba(120, 120, 120, 0.6);
}
```
